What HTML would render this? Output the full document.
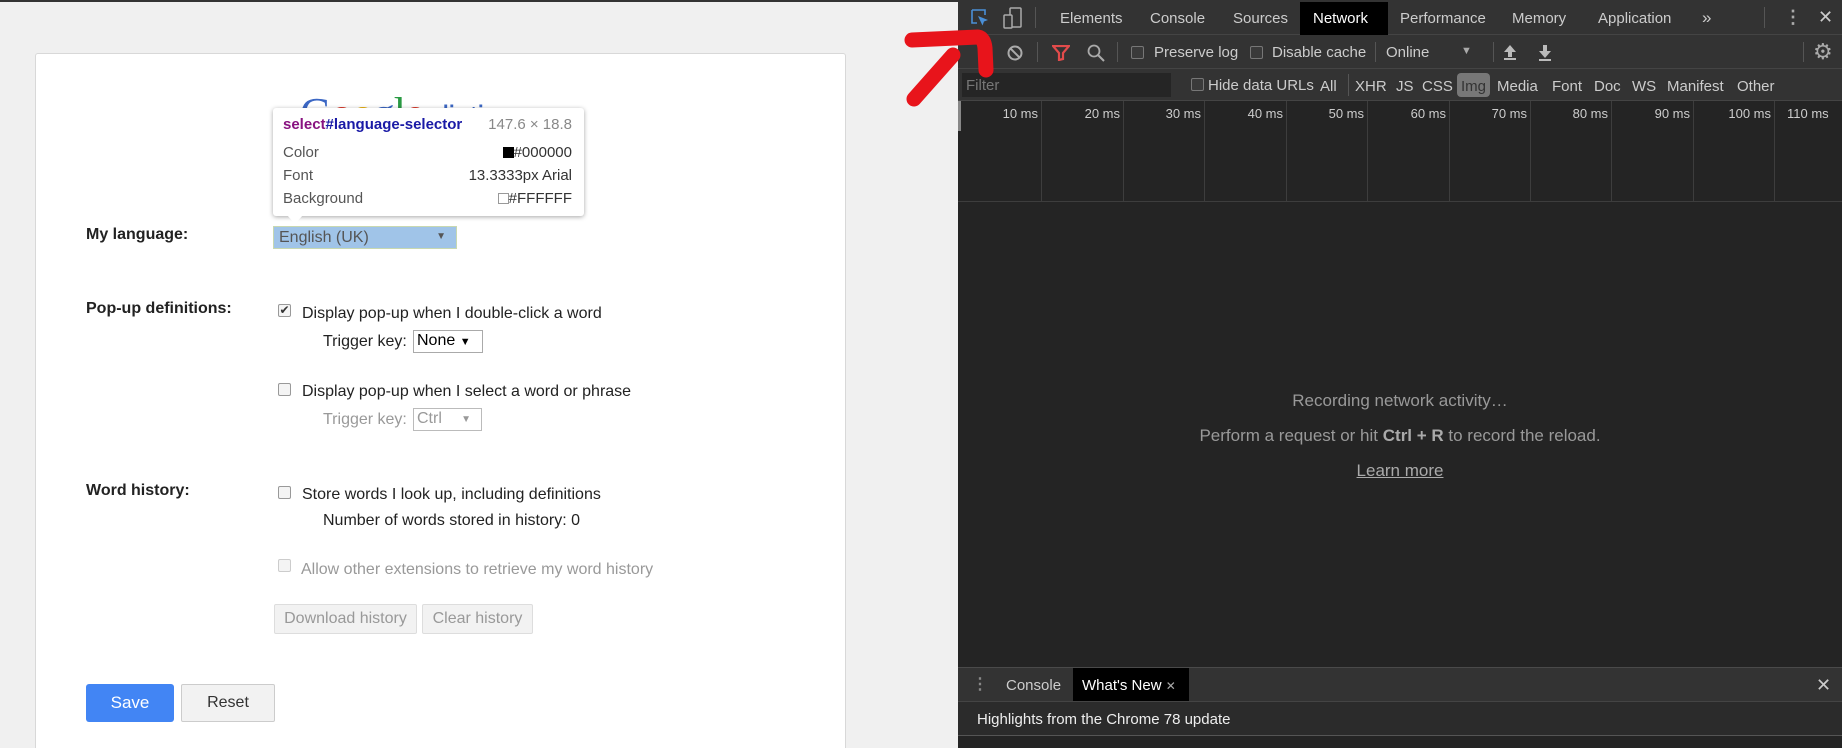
<!DOCTYPE html>
<html style="width:1842px;height:748px;overflow:hidden"><head><meta charset="utf-8"><style>
*{margin:0;padding:0;box-sizing:border-box}
body{width:1842px;height:748px;overflow:hidden;position:relative;background:#f0f0f0;font-family:"Liberation Sans",Arial,sans-serif}
.a{position:absolute;white-space:nowrap}
.card{position:absolute;left:35px;top:53px;width:811px;height:695px;background:#fff;border:1px solid #d8d8d8;border-bottom:none;border-radius:3px 3px 0 0}
.lbl{font-weight:bold;font-size:16px;color:#222}
.t{font-size:16px;color:#222}
.g{color:#999}
.cb{position:absolute;width:13px;height:13px;border:1px solid #999;border-radius:2px;background:#f4f4f4}
.sel{position:absolute;border:1px solid #aaa;font-size:16px;padding:1px 3px;background:#fff}
.btn{position:absolute;border:1px solid #ddd;background:#f2f2f2;color:#999;font-size:16px;text-align:center;border-radius:2px}
.dt{position:absolute;left:958px;top:0;width:884px;height:748px;background:#242424;color:#ccc;font-size:15px}
.dt .a{color:#ccc}
.cbd{position:absolute;width:13px;height:13px;border:1px solid #777;border-radius:2px;background:#3a3a3a}
.vl{position:absolute;top:101px;width:1px;height:100px;background:#3d3d3d}
.ms{position:absolute;top:106px;font-size:13px;color:#ccc;text-align:right;width:60px}
</style></head><body>
<div class="a" style="left:0;top:0;width:958px;height:2px;background:#333"></div>
<div class="card"></div>
<div class="a" style="left:300px;top:88px;font-family:'Liberation Serif',serif;font-size:44px;color:#3b67c4;letter-spacing:-1px">G<span style="color:#d9392b">o</span><span style="color:#e8b010">o</span>g<span style="color:#2a9a43">l</span><span style="color:#d9392b">e</span><span style="font-family:'Liberation Sans',sans-serif;font-size:32px;color:#3b67c4"> dictionary</span></div>
<div class="a" style="left:273px;top:108px;width:311px;height:108px;background:#fff;border-radius:3px;box-shadow:0 1px 5px rgba(0,0,0,.35);font-size:15px;color:#555">
<div class="a" style="left:10px;top:8px;font-weight:bold;color:#1a1aa6"><span style="color:#881280">select</span>#language-selector</div>
<div class="a" style="right:12px;top:8px;color:#888">147.6 × 18.8</div>
<div class="a" style="left:10px;top:36px">Color</div><div class="a" style="right:12px;top:36px;color:#333"><span style="display:inline-block;width:11px;height:11px;background:#000;vertical-align:-1px"></span>#000000</div>
<div class="a" style="left:10px;top:59px">Font</div><div class="a" style="right:12px;top:59px;color:#333">13.3333px Arial</div>
<div class="a" style="left:10px;top:82px">Background</div><div class="a" style="right:12px;top:82px;color:#333"><span style="display:inline-block;width:11px;height:11px;border:1px solid #999;vertical-align:-1px"></span>#FFFFFF</div>
</div>
<div class="a" style="left:287px;top:215px;width:0;height:0;border-left:8px solid transparent;border-right:8px solid transparent;border-top:9px solid #fff"></div>
<div class="a lbl" style="left:86px;top:226px">My language:</div>
<div class="a" style="left:273px;top:226px;width:184px;height:23px;background:#a0c4e8;border:1px solid #c8d8b0;font-size:16px;color:#555;padding:2px 5px">English (UK)<span style="position:absolute;right:10px;top:4px;font-size:10px">▼</span></div>
<div class="a lbl" style="left:86px;top:300px">Pop-up definitions:</div>
<div class="cb" style="left:278px;top:304px;font-size:12px;line-height:11px;text-align:center;color:#333">✔</div>
<div class="a t" style="left:302px;top:305px">Display pop-up when I double-click a word</div>
<div class="a t" style="left:323px;top:333px">Trigger key:</div>
<div class="sel" style="left:413px;top:330px;width:70px;height:23px">None <span style="font-size:11px">▼</span></div>
<div class="cb" style="left:278px;top:383px"></div>
<div class="a t" style="left:302px;top:383px">Display pop-up when I select a word or phrase</div>
<div class="a t g" style="left:323px;top:411px">Trigger key:</div>
<div class="sel g" style="left:413px;top:408px;width:69px;height:23px;border-color:#bbb">Ctrl<span style="position:absolute;right:10px;top:5px;font-size:10px">▼</span></div>
<div class="a lbl" style="left:86px;top:482px">Word history:</div>
<div class="cb" style="left:278px;top:486px"></div>
<div class="a t" style="left:302px;top:486px">Store words I look up, including definitions</div>
<div class="a t" style="left:323px;top:512px">Number of words stored in history: 0</div>
<div class="cb" style="left:278px;top:559px;border-color:#ccc"></div>
<div class="a t g" style="left:301px;top:561px">Allow other extensions to retrieve my word history</div>
<div class="btn" style="left:274px;top:604px;width:143px;height:30px;line-height:28px">Download history</div>
<div class="btn" style="left:422px;top:604px;width:111px;height:30px;line-height:28px">Clear history</div>
<div class="a" style="left:86px;top:684px;width:88px;height:38px;background:#4285f4;border-radius:3px;color:#fff;font-size:17px;text-align:center;line-height:38px">Save</div>
<div class="btn" style="left:181px;top:684px;width:94px;height:38px;line-height:36px;color:#333;border-color:#ccc">Reset</div>

<div class="dt">
<div class="a" style="left:0;top:0;width:884px;height:35px;background:#333;border-bottom:1px solid #444"></div>
<svg class="a" style="left:12px;top:8px" width="20" height="20" viewBox="0 0 20 20"><path d="M2 2h13v5M2 2v13h5" fill="none" stroke="#4a8fd6" stroke-width="1.6"/><path d="M8 8l10 4-4 1.5-1.5 4z" fill="#4a8fd6"/></svg>
<svg class="a" style="left:45px;top:7px" width="20" height="22" viewBox="0 0 20 22"><rect x="7" y="1" width="11" height="19" rx="1" fill="none" stroke="#aaa" stroke-width="1.5"/><rect x="1" y="8" width="8" height="13" rx="1" fill="#333" stroke="#aaa" stroke-width="1.5"/></svg>
<div class="a" style="left:77px;top:7px;width:1px;height:21px;background:#555"></div>
<div class="a" style="left:102px;top:10px">Elements</div>
<div class="a" style="left:192px;top:10px">Console</div>
<div class="a" style="left:275px;top:10px">Sources</div>
<div class="a" style="left:342px;top:2px;width:88px;height:33px;background:#000"></div>
<div class="a" style="left:355px;top:10px;color:#fff!important">Network</div>
<div class="a" style="left:442px;top:10px">Performance</div>
<div class="a" style="left:554px;top:10px">Memory</div>
<div class="a" style="left:640px;top:10px">Application</div>
<div class="a" style="left:744px;top:8px;font-size:17px">»</div>
<div class="a" style="left:806px;top:7px;width:1px;height:21px;background:#555"></div>
<div class="a" style="left:826px;top:7px;font-size:18px;font-weight:bold;color:#aaa">⋮</div>
<div class="a" style="left:860px;top:7px;font-size:18px">✕</div>

<div class="a" style="left:0;top:35px;width:884px;height:34px;background:#333;border-bottom:1px solid #444"></div>
<svg class="a" style="left:48px;top:44px" width="18" height="18" viewBox="0 0 18 18"><circle cx="9" cy="9" r="6.5" fill="none" stroke="#aaa" stroke-width="2"/><path d="M4.5 4.5l9 9" stroke="#aaa" stroke-width="2"/></svg>
<div class="a" style="left:79px;top:42px;width:1px;height:20px;background:#555"></div>
<svg class="a" style="left:94px;top:45px" width="18" height="16" viewBox="0 0 18 16"><path d="M1 1h16l-6 7v6l-4 1V8z" fill="none" stroke="#e24b4b" stroke-width="2.2"/></svg>
<svg class="a" style="left:128px;top:43px" width="20" height="20" viewBox="0 0 20 20"><circle cx="8" cy="8" r="5.5" fill="none" stroke="#aaa" stroke-width="1.8"/><path d="M12 12l6 6" stroke="#aaa" stroke-width="2"/></svg>
<div class="a" style="left:159px;top:42px;width:1px;height:20px;background:#555"></div>
<div class="cbd" style="left:173px;top:46px"></div><div class="a" style="left:196px;top:44px">Preserve log</div>
<div class="cbd" style="left:292px;top:46px"></div><div class="a" style="left:314px;top:44px">Disable cache</div>
<div class="a" style="left:417px;top:42px;width:1px;height:20px;background:#555"></div>
<div class="a" style="left:428px;top:44px">Online</div>
<div class="a" style="left:503px;top:45px;font-size:11px;color:#aaa">▼</div>
<div class="a" style="left:535px;top:42px;width:1px;height:20px;background:#555"></div>
<svg class="a" style="left:545px;top:43px" width="14" height="18" viewBox="0 0 14 18"><path d="M7 2L1 9h4v5h4V9h4z" fill="#bbb"/><path d="M1 16h12" stroke="#bbb" stroke-width="2"/></svg>
<svg class="a" style="left:580px;top:43px" width="14" height="18" viewBox="0 0 14 18"><path d="M7 15L1 8h4V2h4v6h4z" fill="#bbb"/><path d="M1 17h12" stroke="#bbb" stroke-width="2"/></svg>
<div class="a" style="left:845px;top:42px;width:1px;height:20px;background:#555"></div>
<div class="a" style="left:855px;top:39px;font-size:22px;color:#aaa">⚙</div>

<div class="a" style="left:0;top:69px;width:884px;height:32px;background:#333;border-bottom:1px solid #444"></div>
<div class="a" style="left:4px;top:73px;width:209px;height:24px;background:#252525"></div>
<div class="a" style="left:8px;top:77px;color:#777!important;font-size:15px">Filter</div>
<div class="cbd" style="left:233px;top:78px"></div><div class="a" style="left:250px;top:77px">Hide data URLs</div>
<div class="a" style="left:362px;top:78px">All</div>
<div class="a" style="left:390px;top:74px;width:1px;height:22px;background:#555"></div>
<div class="a" style="left:397px;top:78px">XHR</div>
<div class="a" style="left:438px;top:78px">JS</div>
<div class="a" style="left:464px;top:78px">CSS</div>
<div class="a" style="left:499px;top:73px;width:33px;height:24px;background:#777;border-radius:4px"></div>
<div class="a" style="left:503px;top:78px;color:#333!important">Img</div>
<div class="a" style="left:539px;top:78px">Media</div>
<div class="a" style="left:594px;top:78px">Font</div>
<div class="a" style="left:636px;top:78px">Doc</div>
<div class="a" style="left:674px;top:78px">WS</div>
<div class="a" style="left:709px;top:78px">Manifest</div>
<div class="a" style="left:779px;top:78px">Other</div>

<div class="a" style="left:0;top:101px;width:3px;height:30px;background:#888"></div>
<div class="vl" style="left:83px"></div><div class="vl" style="left:165px"></div><div class="vl" style="left:246px"></div><div class="vl" style="left:328px"></div><div class="vl" style="left:409px"></div><div class="vl" style="left:491px"></div><div class="vl" style="left:572px"></div><div class="vl" style="left:653px"></div><div class="vl" style="left:735px"></div><div class="vl" style="left:816px"></div>
<div class="ms" style="left:20px">10 ms</div><div class="ms" style="left:102px">20 ms</div><div class="ms" style="left:183px">30 ms</div><div class="ms" style="left:265px">40 ms</div><div class="ms" style="left:346px">50 ms</div><div class="ms" style="left:428px">60 ms</div><div class="ms" style="left:509px">70 ms</div><div class="ms" style="left:590px">80 ms</div><div class="ms" style="left:672px">90 ms</div><div class="ms" style="left:753px">100 ms</div><div class="a" style="left:829px;top:106px;font-size:13px">110 ms</div>
<div class="a" style="left:0;top:201px;width:884px;height:1px;background:#3d3d3d"></div>

<div class="a" style="left:0;top:391px;width:884px;text-align:center;font-size:17px;color:#999!important">Recording network activity…</div>
<div class="a" style="left:0;top:426px;width:884px;text-align:center;font-size:17px;color:#999!important">Perform a request or hit <b style="color:#aaa">Ctrl + R</b> to record the reload.</div>
<div class="a" style="left:0;top:461px;width:884px;text-align:center;font-size:17px;color:#aaa!important;text-decoration:underline">Learn more</div>

<div class="a" style="left:0;top:667px;width:884px;height:35px;background:#333;border-top:1px solid #4a4a4a;border-bottom:1px solid #444"></div>
<div class="a" style="left:14px;top:674px;font-size:16px;font-weight:bold;color:#888!important">⋮</div>
<div class="a" style="left:48px;top:677px">Console</div>
<div class="a" style="left:115px;top:668px;width:116px;height:33px;background:#000"></div>
<div class="a" style="left:124px;top:677px;color:#fff!important">What's New <span style="font-size:12px;color:#aaa">✕</span></div>
<div class="a" style="left:858px;top:675px;font-size:18px">✕</div>
<div class="a" style="left:0;top:702px;width:884px;height:34px;background:#2b2b2b;border-bottom:1px solid #555"></div>
<div class="a" style="left:19px;top:711px;color:#eee!important">Highlights from the Chrome 78 update</div>
</div>
<svg class="a" style="left:0;top:0" width="1842" height="748"><path d="M912 40L978 37Q984 38 985 48L986 70M953 55L914 99" fill="none" stroke="#e8141b" stroke-width="15" stroke-linecap="round" stroke-linejoin="round"/></svg>
</body></html>
